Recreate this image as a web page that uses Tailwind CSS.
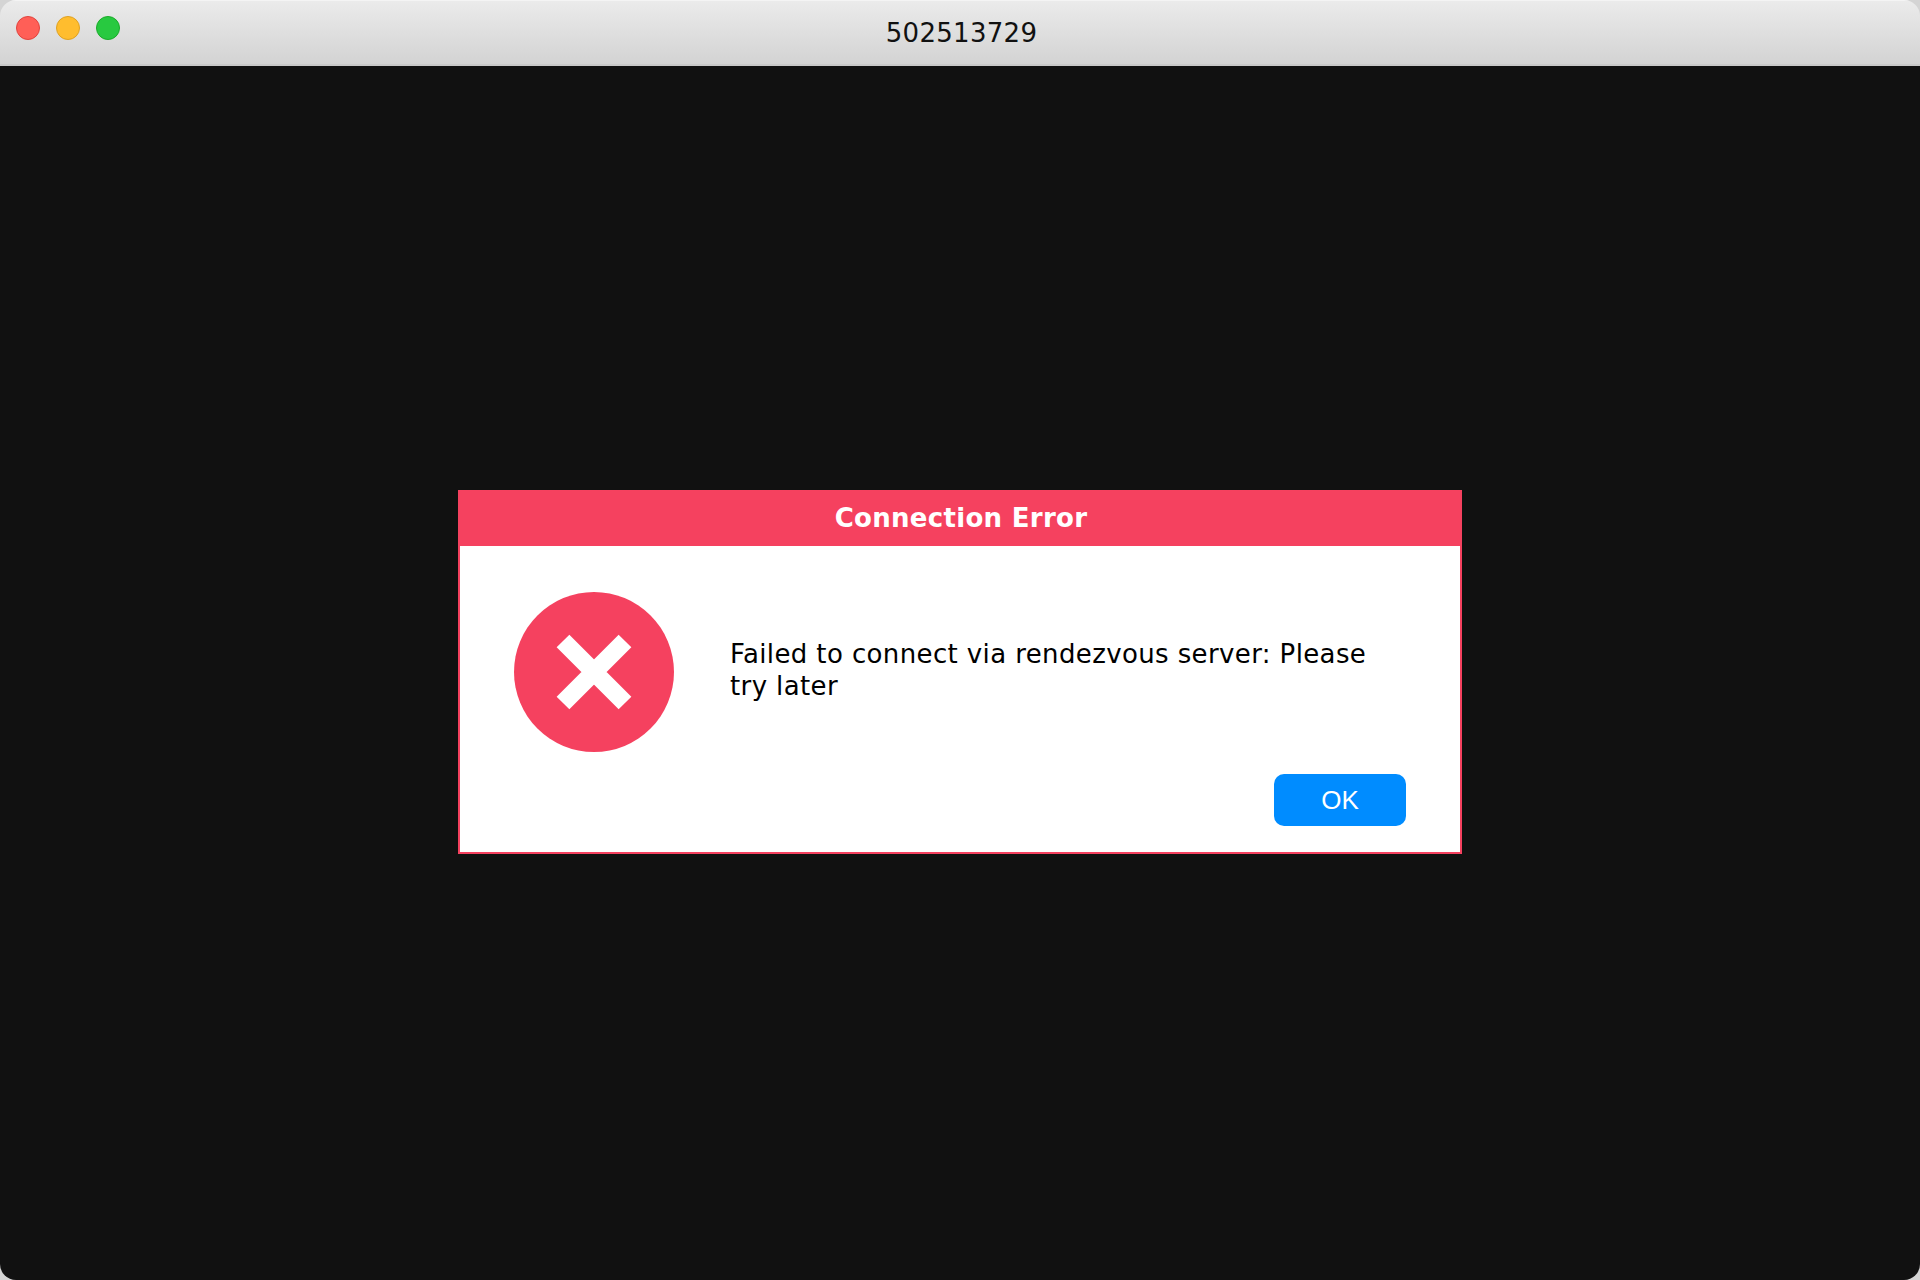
<!DOCTYPE html>
<html lang="en">
  <head>
    <meta charset="UTF-8" />
    <title>502513729</title>
    <script src="https://cdn.jsdelivr.net/npm/@tailwindcss/browser@4"></script>
  </head>
  <body class="bg-[#d4d4d4] font-['DejaVu_Sans',sans-serif]">
    <div class="w-[1920px] h-[1280px] flex flex-col rounded-[16px] overflow-hidden">
      <!-- Title bar -->
      <div class="relative h-[66px] shrink-0 flex items-center justify-center bg-gradient-to-b from-[#ebebeb] to-[#d3d3d3] border-t border-t-[#f4f4f4] border-b-2 border-b-[#c9c9c9]">
        <div class="absolute left-[16px] top-[15px] flex gap-[16px]">
          <span class="w-[24px] h-[24px] rounded-full bg-[#ff5f57] border border-[#e0443e]"></span>
          <span class="w-[24px] h-[24px] rounded-full bg-[#ffbd2e] border border-[#dea123]"></span>
          <span class="w-[24px] h-[24px] rounded-full bg-[#28c940] border border-[#1aab29]"></span>
        </div>
        <span class="text-[26px] leading-none tracking-[0.3px] text-[#111111] pl-[3px]">502513729</span>
      </div>

      <!-- Session area -->
      <div class="flex-1 bg-[#111111] flex items-center justify-center pb-[2px]">
        <div class="w-[1004px] h-[364px] flex flex-col bg-white border-2 border-[#f5415f]">
          <div class="h-[55px] shrink-0 -mt-px bg-[#f5415f] flex items-center justify-center text-white text-[26px] font-bold tracking-[0.3px] pl-[2px]">Connection Error</div>
          <div class="flex items-center pl-[54px] pt-[46px]">
            <svg class="w-[160px] h-[160px] shrink-0" viewBox="0 0 160 160">
              <circle cx="80" cy="80" r="80" fill="#f5415f" />
              <path d="M49 49 L111 111 M111 49 L49 111" stroke="#ffffff" stroke-width="18" fill="none" />
            </svg>
            <p class="ml-[56px] mb-[4px] w-[660px] text-[26px] leading-[32px] tracking-[0.38px] text-black">Failed to connect via rendezvous server: Please try later</p>
          </div>
          <div class="flex justify-end pr-[54px] mt-[22px]">
            <button class="w-[132px] h-[52px] rounded-[10px] bg-[#008cff] text-white text-[26px] [font-family:'Liberation_Sans',sans-serif]">OK</button>
          </div>
        </div>
      </div>
    </div>
  </body>
</html>
